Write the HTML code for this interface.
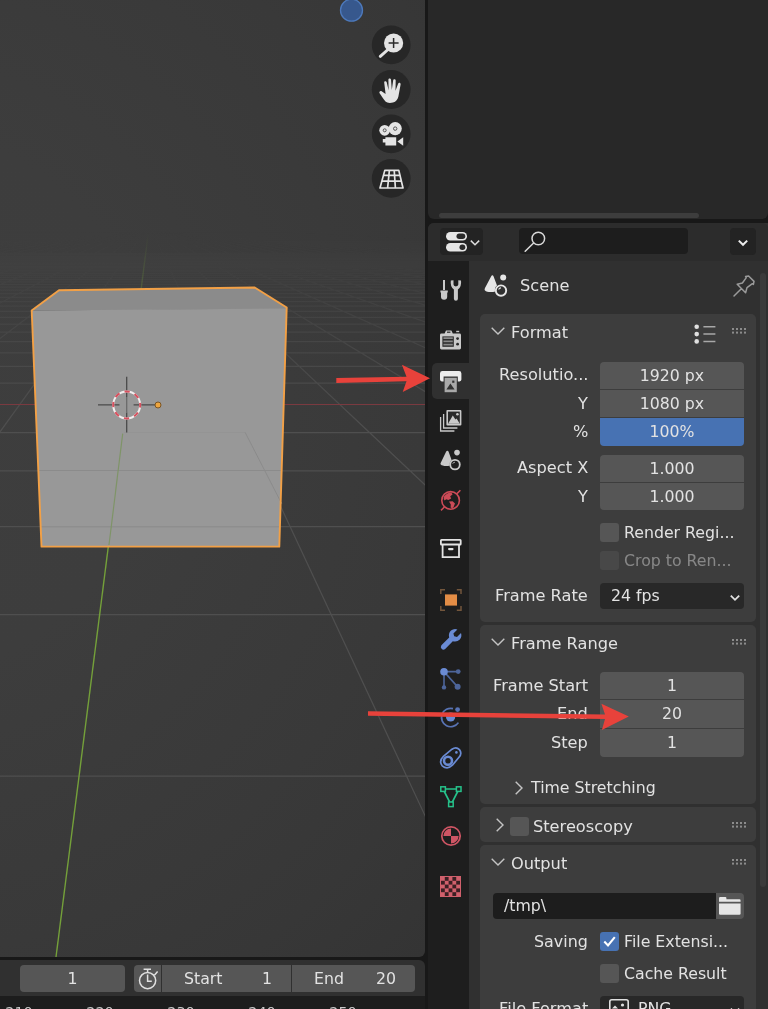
<!DOCTYPE html>
<html lang="en">
<head>
<meta charset="utf-8">
<title>Blender - Output Properties</title>
<style>
html,body{margin:0;padding:0;background:#181818;}
body{width:768px;height:1009px;overflow:hidden;position:relative;font-family:"DejaVu Sans","Liberation Sans",sans-serif;font-size:15.75px;color:#e2e2e2;}
.a{position:absolute;}
svg{position:absolute;overflow:visible;}
.t{position:absolute;white-space:nowrap;line-height:20px;height:20px;will-change:transform;}
.r,.h{font-size:16.2px;}
.r{text-align:right;}
.c{text-align:center;}
#viewport{left:0;top:0;width:425px;height:957px;background:#383838 radial-gradient(ellipse 800px 830px at -110px 403px,#3e3e3e 0%,#3d3d3d 33.3%,#3b3b3b 50%,#393939 66.7%,#373737 80%,#343434 94.3%,#333333 100%);overflow:hidden;border-radius:0 0 6px 0;}
#outliner{left:428px;top:0;width:340px;height:219px;background:#282828;border-radius:0 0 6px 6px;}
#oscroll{left:439px;top:213px;width:260px;height:5px;background:#3d3d3d;border-radius:3px;}
#props{left:428px;top:223px;width:340px;height:786px;background:#303030;border-radius:6px 0 0 0;}
#phead{left:428px;top:223px;width:340px;height:38px;background:#2c2c2c;border-radius:6px 6px 0 0;}
#tabs{left:428px;top:261px;width:40.5px;height:748px;background:#1e1e1e;}
#atab{left:432px;top:363px;width:36.5px;height:36px;background:#303030;border-radius:5px 0 0 5px;}
#vscroll{left:760px;top:273px;width:6px;height:614px;background:#3b3b3b;border-radius:3px;}
#timeline{left:0;top:960px;width:425px;height:49px;background:#1d1d1d;border-radius:0 6px 0 0;overflow:hidden;}
#tlhead{left:0;top:0;width:425px;height:36px;background:#303030;}
.panel{position:absolute;left:480px;width:276px;background:#3d3d3d;border-radius:5px;}
.fld{will-change:transform;position:absolute;left:600px;width:144px;background:#565656;text-align:center;white-space:nowrap;}
.cb{position:absolute;left:600px;width:19px;height:19px;background:#565656;border-radius:3px;}
.dd{position:absolute;left:600px;width:144px;background:#282828;border-radius:4px;}
.dim{opacity:.45;}
.tf{will-change:transform;position:absolute;top:5px;height:27px;line-height:27px;background:#565656;white-space:nowrap;}
</style>
</head>
<body>
<div id="viewport" class="a"><svg width="425" height="957" viewBox="0 0 425 957" style="left:0;top:0;"><defs><linearGradient id="fade" x1="0" y1="232" x2="0" y2="430" gradientUnits="userSpaceOnUse"><stop offset="0" stop-color="#000"/><stop offset="1" stop-color="#fff"/></linearGradient><mask id="gm" maskUnits="userSpaceOnUse" x="0" y="0" width="425" height="957"><rect x="0" y="0" width="425" height="957" fill="url(#fade)"/></mask></defs><path d="M0 253.1H425 M0 253.7H425 M0 254.3H425 M0 255.0H425 M0 255.7H425 M0 256.4H425 M0 257.2H425 M0 257.9H425 M0 258.8H425 M0 259.7H425 M0 260.6H425 M0 261.6H425 M0 262.6H425 M0 263.7H425 M0 264.8H425 M0 266.1H425 M0 267.4H425 M0 268.8H425 M0 270.3H425 M0 271.9H425 M0 273.6H425 M0 275.4H425 M0 277.4H425 M0 279.5H425 M0 281.9H425 M0 284.4H425 M0 287.2H425 M0 290.2H425 M0 293.6H425 M0 297.3H425 M0 301.5H425 M0 306.1H425 M0 311.4H425 M0 317.4H425 M0 324.2H425 M0 332.2H425 M0 341.6H425 M0 352.8H425 M0 366.4H425 M0 383.2H425 M0 432.5H425 M0 470.8H425 M0 526.5H425 M0 614.7H425 M0 776.0H425 M149.3 225.0L-12992.6 957 M149.3 225.0L-12557.6 957 M149.3 225.0L-12122.7 957 M149.3 225.0L-11687.7 957 M149.3 225.0L-11252.8 957 M149.3 225.0L-10817.8 957 M149.3 225.0L-10382.9 957 M149.3 225.0L-9947.9 957 M149.3 225.0L-9513.0 957 M149.3 225.0L-9078.0 957 M149.3 225.0L-8643.0 957 M149.3 225.0L-8208.1 957 M149.3 225.0L-7773.1 957 M149.3 225.0L-7338.2 957 M149.3 225.0L-6903.2 957 M149.3 225.0L-6468.3 957 M149.3 225.0L-6033.3 957 M149.3 225.0L-5598.4 957 M149.3 225.0L-5163.4 957 M149.3 225.0L-4728.5 957 M149.3 225.0L-4293.5 957 M149.3 225.0L-3858.5 957 M149.3 225.0L-3423.6 957 M149.3 225.0L-2988.6 957 M149.3 225.0L-2553.7 957 M149.3 225.0L-2118.7 957 M149.3 225.0L-1683.8 957 M149.3 225.0L-1248.8 957 M149.3 225.0L-813.9 957 M149.3 225.0L-378.9 957 M149.3 225.0L491.0 957 M149.3 225.0L926.0 957 M149.3 225.0L1360.9 957 M149.3 225.0L1795.9 957 M149.3 225.0L2230.8 957 M149.3 225.0L2665.8 957 M149.3 225.0L3100.7 957 M149.3 225.0L3535.7 957 M149.3 225.0L3970.6 957 M149.3 225.0L4405.6 957 M149.3 225.0L4840.5 957 M149.3 225.0L5275.5 957 M149.3 225.0L5710.5 957 M149.3 225.0L6145.4 957 M149.3 225.0L6580.4 957 M149.3 225.0L7015.3 957 M149.3 225.0L7450.3 957 M149.3 225.0L7885.2 957 M149.3 225.0L8320.2 957 M149.3 225.0L8755.1 957 M149.3 225.0L9190.1 957 M149.3 225.0L9625.0 957 M149.3 225.0L10060.0 957 M149.3 225.0L10494.9 957 M149.3 225.0L10929.9 957 M149.3 225.0L11364.9 957 M149.3 225.0L11799.8 957 M149.3 225.0L12234.8 957 M149.3 225.0L12669.7 957 M149.3 225.0L13104.7 957" stroke="#4f4f4f" stroke-width="1.25" fill="none" mask="url(#gm)"/><path d="M0 404.5H425" stroke="#7a3a40" stroke-width="1.2"/><path d="M149.3 225.0L56 957" stroke="#74a03a" stroke-width="1.4" mask="url(#gm)"/><path d="M31.7 310.5L59 290.3L254.7 287.5L286.7 307.5L286.6 309.5Z" fill="#8b8b8b"/><path d="M31.7 310.5L286.7 308.6L279.3 546.6L41.5 546.6Z" fill="#989898"/><path d="M124 432.5H246" stroke="#949494" stroke-width="1" fill="none"/><path d="M38 470.5H282M40 526.8H280M245.2 432.5L281.6 503.5" stroke="#8b8b8b" stroke-width="1" fill="none"/><path d="M122.7 433.6L109 545" stroke="#7f9468" stroke-width="1.2" fill="none"/><path d="M31.7 310.5L59 290.3L254.7 287.5L286.7 307.5L279.3 546.6L41.5 546.6Z" fill="none" stroke="#f2a046" stroke-width="1.9" stroke-linejoin="round"/><path d="M98 404.9H119.5M133.6 404.9H155.5M126.7 376.7V397M126.7 412.5V432.4" stroke="#4a4a4a" stroke-width="1.3"/><path d="M126.7 397V412.5" stroke="#6a6a6a" stroke-width="1.3"/><circle cx="126.7" cy="404.9" r="13.5" fill="none" stroke="#f2eeee" stroke-width="2"/><circle cx="126.7" cy="404.9" r="13.5" fill="none" stroke="#d8505e" stroke-width="2" stroke-dasharray="5.3 5.3" stroke-dashoffset="2.6"/><circle cx="158" cy="405" r="3" fill="#eda53f" stroke="#7a5424" stroke-width="1"/><circle cx="351.5" cy="10.2" r="11" fill="#37588d" stroke="#4d79bb" stroke-width="1.3"/><circle cx="391.2" cy="44.9" r="19.4" fill="#272727"/><circle cx="391.2" cy="89.5" r="19.4" fill="#272727"/><circle cx="391.2" cy="133.9" r="19.4" fill="#272727"/><circle cx="391.2" cy="178.4" r="19.4" fill="#272727"/><path d="M388 49.5L380.3 56.3" stroke="#e4e4e4" stroke-width="3" stroke-linecap="round"/><circle cx="393.6" cy="43" r="9.6" fill="#e4e4e4"/><path d="M388.6 43H398.6M393.6 38V48" stroke="#2a2a2a" stroke-width="1.5"/><path d="M385.5 101.5C383.5 99 381 95.5 379.6 93.3C378.8 92 380.2 90.6 381.6 91.3L385.6 94L384.2 82.6C384 81 386.3 80.6 386.7 82.2L388.6 90.2L388.4 79.6C388.4 78 390.8 78 391 79.6L391.8 90L393.2 80.2C393.4 78.7 395.7 78.9 395.7 80.5L395.5 90.8L398.2 83.6C398.8 82.1 400.9 82.8 400.6 84.4L398.4 96.5C397.8 99.5 396 101.8 393 102.5C390 103.2 387 103 385.5 101.5Z" fill="#e4e4e4"/><circle cx="384.7" cy="130.3" r="5.4" fill="#e4e4e4"/><circle cx="395.2" cy="128.6" r="6.6" fill="#e4e4e4"/><circle cx="384.7" cy="130.3" r="1.5" fill="none" stroke="#555" stroke-width="1"/><circle cx="395.2" cy="128.6" r="1.7" fill="none" stroke="#555" stroke-width="1"/><path d="M385.4 137.2H396.2V145.6H385.4ZM382.8 139H385.6V142.6H382.8ZM397.4 141.5L403.2 137.3V145.7Z" fill="#e4e4e4"/><path d="M384.8 170.4H398.8L403 188H380ZM389.4 170.4L387.6 188M394.2 170.4L395.4 188M383.6 175.4H400M382 181.2H401.4" fill="none" stroke="#e4e4e4" stroke-width="1.7" stroke-linejoin="round"/></svg></div>
<div id="outliner" class="a"></div>
<div id="oscroll" class="a"></div>
<div id="props" class="a"></div>
<div id="phead" class="a"></div>
<div id="tabs" class="a"></div>
<div id="atab" class="a"></div>
<div id="vscroll" class="a"></div>
<svg width="22" height="22" viewBox="0 0 22 22" style="left:440px;top:280px;"><g fill="#c9c9c9"><rect x="3" y="0" width="2" height="10"/><path d="M0.4 10.6H7.8V12.4H7.2V16.8Q7.2 19.8 4.1 19.8Q1 19.8 1 16.8V12.4H0.4Z"/><path d="M10.8 0.6L13.5 0.2V4.6Q13.5 6.4 15.9 6.4Q18.3 6.4 18.3 4.6V0.2L21 0.6Q21.8 6.8 17.9 9.6V18.8Q17.9 20.8 15.9 20.8Q13.9 20.8 13.9 18.8V9.6Q10 6.8 10.8 0.6Z"/></g></svg>
<svg width="22" height="22" viewBox="0 0 22 22" style="left:440px;top:330px;"><g fill="#c9c9c9"><path d="M0 5Q0 3.6 1.4 3.6H4.6L6 0.6H11.4L12.8 3.6H19.6Q21 3.6 21 5V18Q21 19.4 19.6 19.4H1.4Q0 19.4 0 18Z"/><rect x="16.2" y="0.8" width="3" height="1.4"/></g><rect x="2.4" y="6.4" width="11.4" height="10.4" fill="#2a2a2a"/><path d="M3.4 8.2H12.8M3.4 11.4H12.8M3.4 14.6H12.8" stroke="#8a8a8a" stroke-width="1.7"/><circle cx="17.6" cy="8.6" r="1.4" fill="#2a2a2a"/><circle cx="17.6" cy="14.2" r="1.4" fill="#2a2a2a"/><rect x="7" y="1.6" width="3.4" height="1.2" fill="#2a2a2a"/></svg>
<svg width="22" height="22" viewBox="0 0 22 22" style="left:440px;top:370.5px;"><path d="M0 2.4Q0 0 2.4 0H19Q21.4 0 21.4 2.4V8.6Q21.4 10.4 19.6 10.4H17.8V5.6H3.6V10.4H1.8Q0 10.4 0 8.6Z" fill="#ededed"/><rect x="4.6" y="6.8" width="12.2" height="14.4" fill="#a9a9a9"/><path d="M6.4 18.6L10.4 12.4L14.6 18.6Z" fill="#333"/><rect x="12.2" y="9.6" width="2.2" height="2.2" fill="#333"/></svg>
<svg width="22" height="22" viewBox="0 0 22 22" style="left:440px;top:409.5px;"><path d="M3.6 4V18H17.4M0.6 7V21H14.4" fill="none" stroke="#c9c9c9" stroke-width="1.3"/><rect x="6.4" y="0" width="15" height="15.4" rx="1" fill="#c9c9c9"/><rect x="8" y="1.6" width="11.8" height="12.2" fill="#2a2a2a"/><path d="M8 13.8L12.8 5.4L15.4 9.6L16.6 8.4L19.8 13.8Z" fill="#c9c9c9"/><circle cx="17.4" cy="4.2" r="1.3" fill="#c9c9c9"/></svg>
<svg width="22" height="22" viewBox="0 0 22 22" style="left:440px;top:448.5px;"><g fill="#c9c9c9"><path d="M6.2 2.6C6.8 1.4 8 1.4 8.5 2.6L11.6 11C9.8 12.4 9.4 14.6 10 16.4C7 17.6 2.2 17.2 0.8 15.6C0.3 15 0.5 14.2 0.9 13.4Z"/><circle cx="17" cy="3.6" r="2.8"/></g><circle cx="15" cy="15.6" r="4.8" fill="none" stroke="#c9c9c9" stroke-width="1.8"/><path d="M12.8 14.6A2.4 2.4 0 0 1 14.8 13.2" fill="none" stroke="#c9c9c9" stroke-width="1"/></svg>
<svg width="22" height="22" viewBox="0 0 22 22" style="left:440px;top:488.5px;"><circle cx="10.6" cy="11.4" r="8.8" fill="none" stroke="#cc4b57" stroke-width="1.6"/><path d="M4 7.4Q7 3.6 11.4 3.4L12.6 5.6L10.2 7.2L11.2 9.4L8.4 11L6.2 10.2L4.6 11.4Q3.2 9.6 4 7.4ZM9 12.6L12.6 12.2L15 14.4L13.4 18.4Q11.6 19.4 10.6 18.6L10.8 15.6Z" fill="#cc4b57"/><path d="M1 21.4L4.4 18M17 4.6L20.4 1.2" stroke="#cc4b57" stroke-width="1.5"/></svg>
<svg width="22" height="22" viewBox="0 0 22 22" style="left:440px;top:539px;"><rect x="0.9" y="0.9" width="19.8" height="4.6" rx="0.6" fill="none" stroke="#e4e4e4" stroke-width="1.8"/><path d="M2.6 5.6V18.2H19V5.6" fill="none" stroke="#e4e4e4" stroke-width="1.8"/><rect x="8" y="9" width="5.6" height="2.2" rx="1.1" fill="#e4e4e4"/></svg>
<svg width="22" height="22" viewBox="0 0 22 22" style="left:440px;top:589px;"><rect x="5" y="5.4" width="12" height="11.2" fill="#e38d46"/><path d="M0.8 5V0.8H5M16.8 0.8H21V5M21 17V21.2H16.8M5 21.2H0.8V17" fill="none" stroke="#73563c" stroke-width="1.5"/></svg>
<svg width="22" height="22" viewBox="0 0 22 22" style="left:440px;top:628px;"><path d="M1.4 17.2L9.2 9.6Q8 5.4 11 2.6Q13.8 0.2 17.4 1.4L13.4 5.4L14.2 8.2L17 9L21 5Q22.2 8.6 19.8 11.4Q17 14.4 12.8 13.2L5.2 21Q3.2 22.4 1.6 20.8Q0 19.2 1.4 17.2Z" fill="#6a8bd4"/></svg>
<svg width="22" height="22" viewBox="0 0 22 22" style="left:440px;top:668px;"><path d="M4 3.6H18M4 3.6V19.4M4 3.6L17.4 18.6" stroke="#4d659a" stroke-width="1.6"/><circle cx="4" cy="3.8" r="3.8" fill="#6a8bd4"/><circle cx="18.2" cy="3.6" r="2.4" fill="#4d659a"/><circle cx="4" cy="19.4" r="2.2" fill="#4d659a"/><circle cx="17.6" cy="18.8" r="3" fill="#4d659a"/></svg>
<svg width="22" height="22" viewBox="0 0 22 22" style="left:440px;top:706px;"><path d="M18.4 16.6A9.2 9.2 0 1 1 13 2.6" fill="none" stroke="#5873b4" stroke-width="1.7"/><circle cx="10.6" cy="11" r="4.6" fill="#6a8bd4"/><circle cx="17.6" cy="3.6" r="2.4" fill="#5873b4"/></svg>
<svg width="22" height="22" viewBox="0 0 22 22" style="left:440px;top:747px;"><path d="M2.2 18.8Q-1.4 14 3.4 9.4L12 2.2Q16.2 -0.8 19.4 2.6Q22.4 6.4 19 10.2L12.4 18.2Q7.4 23 2.2 18.8Z" fill="none" stroke="#6a8bd4" stroke-width="1.7"/><circle cx="8" cy="13.8" r="4" fill="none" stroke="#6a8bd4" stroke-width="2.6"/><circle cx="16.4" cy="5.4" r="1.3" fill="#6a8bd4"/></svg>
<svg width="22" height="22" viewBox="0 0 22 22" style="left:440px;top:785.5px;"><path d="M3 3H19L11 18.6Z" fill="none" stroke="#26c28a" stroke-width="1.7"/><g fill="#1e1e1e" stroke="#26c28a" stroke-width="1.5"><rect x="0.8" y="0.8" width="4.6" height="4.6"/><rect x="16.4" y="0.8" width="4.6" height="4.6"/><rect x="8.6" y="16" width="4.6" height="4.6"/></g></svg>
<svg width="22" height="22" viewBox="0 0 22 22" style="left:440px;top:825px;"><circle cx="11" cy="11" r="9.2" fill="none" stroke="#cf5564" stroke-width="1.7"/><path d="M11 11V3.4A7.6 7.6 0 0 0 3.4 11ZM11 11V18.6A7.6 7.6 0 0 0 18.6 11Z" fill="#cf5564"/></svg>
<svg width="22" height="22" viewBox="0 0 22 22" style="left:440px;top:875.5px;"><rect x="0" y="0" width="21" height="21" fill="#d0606c"/><rect x="1.0" y="4.8" width="3.8" height="3.8" fill="#3a1f23"/><rect x="1.0" y="12.4" width="3.8" height="3.8" fill="#3a1f23"/><rect x="4.8" y="1.0" width="3.8" height="3.8" fill="#3a1f23"/><rect x="4.8" y="8.6" width="3.8" height="3.8" fill="#3a1f23"/><rect x="4.8" y="16.2" width="3.8" height="3.8" fill="#3a1f23"/><rect x="8.6" y="4.8" width="3.8" height="3.8" fill="#3a1f23"/><rect x="8.6" y="12.4" width="3.8" height="3.8" fill="#3a1f23"/><rect x="12.4" y="1.0" width="3.8" height="3.8" fill="#3a1f23"/><rect x="12.4" y="8.6" width="3.8" height="3.8" fill="#3a1f23"/><rect x="12.4" y="16.2" width="3.8" height="3.8" fill="#3a1f23"/><rect x="16.2" y="4.8" width="3.8" height="3.8" fill="#3a1f23"/><rect x="16.2" y="12.4" width="3.8" height="3.8" fill="#3a1f23"/></svg>
<div class="a" style="left:440px;top:228px;width:43px;height:27px;background:#232323;border-radius:4px;"></div>
<svg width="22" height="20" viewBox="0 0 22 20" style="left:446px;top:232px;"><rect x="0" y="0" width="21" height="8.6" rx="4.3" fill="#e6e6e6"/><rect x="10.5" y="1.6" width="8.8" height="5.4" rx="2.7" fill="#2a2a2a"/><rect x="0" y="11" width="21" height="8.6" rx="4.3" fill="#e6e6e6"/><rect x="13.5" y="12.6" width="5.8" height="5.4" rx="2.7" fill="#2a2a2a"/></svg>
<svg width="10" height="6" viewBox="0 0 10 6" style="left:469.5px;top:239.8px;"><path d="M0.8 0.6L5 4.8L9.2 0.6" fill="none" stroke="#dcdcdc" stroke-width="1.5"/></svg>
<div class="a" style="left:519px;top:228px;width:169px;height:26px;background:#1d1d1d;border-radius:4px;"></div>
<svg width="22" height="22" viewBox="0 0 22 22" style="left:524px;top:231px;"><circle cx="14.3" cy="7.5" r="6.3" fill="none" stroke="#d8d8d8" stroke-width="1.5"/><path d="M9.6 12L1.2 20.2" stroke="#d8d8d8" stroke-width="1.6" stroke-linecap="round"/></svg>
<div class="a" style="left:730px;top:228px;width:26px;height:27px;background:#232323;border-radius:4px;"></div>
<svg width="10" height="6" viewBox="0 0 10 6" style="left:738px;top:240px;"><path d="M0.8 0.6L5 4.8L9.2 0.6" fill="none" stroke="#ececec" stroke-width="2"/></svg>
<svg width="24" height="24" viewBox="0 0 24 24" style="left:484px;top:273px;" fill="#e6e6e6"><path d="M7.2 3.2C7.8 2 9 2 9.5 3.2L13 12.5C11 14 10.5 16.5 11.2 18.4C8 19.6 2.5 19.2 1 17.5C0.4 16.8 0.6 16 1 15Z"/><circle cx="19.2" cy="4.6" r="3"/><circle cx="17" cy="17.6" r="5.2" fill="none" stroke="#e6e6e6" stroke-width="1.9"/><path d="M14.6 16.4A2.8 2.8 0 0 1 17 14.9" fill="none" stroke="#e6e6e6" stroke-width="1.1"/></svg>
<div class="t h" style="left:520px;top:275.5px;">Scene</div>
<svg width="22" height="22" viewBox="0 0 22 22" style="left:733px;top:275px;"><path d="M1 21L8.3 13.7M4.2 9.3L12.6 17.8L14 12.6L19.4 8.7L20.4 9.4L21 6.4L15.6 1L12.6 1.6L13.3 2.6L9.4 8Z" fill="none" stroke="#9a9a9a" stroke-width="1.5" stroke-linejoin="round" stroke-linecap="round"/></svg>
<div class="panel" style="top:313.5px;height:308.5px;"></div>
<svg width="14" height="8" viewBox="0 0 14 8" style="left:490.8px;top:327px;"><path d="M0.7 0.7L7 7L13.3 0.7" fill="none" stroke="#c4c4c4" stroke-width="1.4"/></svg>
<div class="t h" style="left:510.5px;top:322.5px;">Format</div>
<svg width="24" height="20" viewBox="0 0 24 20" style="left:694px;top:323.6px;"><circle cx="2.7" cy="2.7" r="2.3" fill="#e0e0e0"/><circle cx="2.7" cy="10.1" r="2.3" fill="#e0e0e0"/><circle cx="2.7" cy="17.4" r="2.3" fill="#e0e0e0"/><path d="M9.4 2.7H21.4M9.4 10.1H21.4M9.4 17.4H21.4" stroke="#a8a8a8" stroke-width="1.5"/></svg>
<svg width="14" height="6" viewBox="0 0 14 6" style="left:731.5px;top:327.6px;" fill="#8c8c8c"><rect x="0" y="0" width="2" height="2"/><rect x="0" y="3.6" width="2" height="2"/><rect x="4" y="0" width="2" height="2"/><rect x="4" y="3.6" width="2" height="2"/><rect x="8" y="0" width="2" height="2"/><rect x="8" y="3.6" width="2" height="2"/><rect x="12" y="0" width="2" height="2"/><rect x="12" y="3.6" width="2" height="2"/></svg>
<div class="t r " style="right:180px;top:365.0px;">Resolutio...</div>
<div class="t r " style="right:180px;top:393.5px;">Y</div>
<div class="t r " style="right:180px;top:422.0px;">%</div>
<div class="fld" style="top:362px;height:27px;line-height:27px;border-radius:4px 4px 0 0;">1920 px</div>
<div class="fld" style="top:390px;height:27px;line-height:27px;border-radius:0;">1080 px</div>
<div class="fld" style="top:418px;height:28px;line-height:28px;border-radius:0 0 4px 4px;background:#4772b3;">100%</div>
<div class="t r " style="right:180px;top:458.0px;">Aspect X</div>
<div class="t r " style="right:180px;top:486.5px;">Y</div>
<div class="fld" style="top:455px;height:27px;line-height:27px;border-radius:4px 4px 0 0;">1.000</div>
<div class="fld" style="top:483px;height:27px;line-height:27px;border-radius:0 0 4px 4px;">1.000</div>
<div class="cb" style="top:522.5px;"></div>
<div class="t " style="left:624px;top:522.5px;">Render Regi...</div>
<div class="cb dim" style="top:551px;"></div>
<div class="t dim" style="left:624px;top:551.0px;">Crop to Ren...</div>
<div class="t r " style="right:180px;top:586.0px;">Frame Rate</div>
<div class="dd" style="top:583px;height:26px;"></div>
<div class="t " style="left:611px;top:586.0px;">24 fps</div>
<svg width="10" height="6" viewBox="0 0 10 6" style="left:730px;top:594.5px;"><path d="M0.8 0.6L5 4.8L9.2 0.6" fill="none" stroke="#e0e0e0" stroke-width="1.8"/></svg>
<div class="panel" style="top:625px;height:179px;"></div>
<svg width="14" height="8" viewBox="0 0 14 8" style="left:490.8px;top:638px;"><path d="M0.7 0.7L7 7L13.3 0.7" fill="none" stroke="#c4c4c4" stroke-width="1.4"/></svg>
<div class="t h" style="left:510.5px;top:633.5px;">Frame Range</div>
<svg width="14" height="6" viewBox="0 0 14 6" style="left:731.5px;top:638.6px;" fill="#8c8c8c"><rect x="0" y="0" width="2" height="2"/><rect x="0" y="3.6" width="2" height="2"/><rect x="4" y="0" width="2" height="2"/><rect x="4" y="3.6" width="2" height="2"/><rect x="8" y="0" width="2" height="2"/><rect x="8" y="3.6" width="2" height="2"/><rect x="12" y="0" width="2" height="2"/><rect x="12" y="3.6" width="2" height="2"/></svg>
<div class="t r " style="right:180px;top:675.8px;">Frame Start</div>
<div class="t r " style="right:180px;top:704.0px;">End</div>
<div class="t r " style="right:180px;top:732.5px;">Step</div>
<div class="fld" style="top:672px;height:27px;line-height:27px;border-radius:4px 4px 0 0;">1</div>
<div class="fld" style="top:700px;height:27.5px;line-height:27.5px;border-radius:0;">20</div>
<div class="fld" style="top:728.5px;height:27.5px;line-height:27.5px;border-radius:0 0 4px 4px;">1</div>
<svg width="8" height="14" viewBox="0 0 8 14" style="left:515px;top:780.5px;"><path d="M0.7 0.7L7 7L0.7 13.3" fill="none" stroke="#c4c4c4" stroke-width="1.4"/></svg>
<div class="t " style="left:530.5px;top:778.0px;">Time Stretching</div>
<div class="panel" style="top:807px;height:35px;"></div>
<svg width="8" height="14" viewBox="0 0 8 14" style="left:495.5px;top:818px;"><path d="M0.7 0.7L7 7L0.7 13.3" fill="none" stroke="#c4c4c4" stroke-width="1.4"/></svg>
<div class="cb" style="left:510px;top:816.5px;"></div>
<div class="t h" style="left:533px;top:816.5px;">Stereoscopy</div>
<svg width="14" height="6" viewBox="0 0 14 6" style="left:731.5px;top:821.6px;" fill="#8c8c8c"><rect x="0" y="0" width="2" height="2"/><rect x="0" y="3.6" width="2" height="2"/><rect x="4" y="0" width="2" height="2"/><rect x="4" y="3.6" width="2" height="2"/><rect x="8" y="0" width="2" height="2"/><rect x="8" y="3.6" width="2" height="2"/><rect x="12" y="0" width="2" height="2"/><rect x="12" y="3.6" width="2" height="2"/></svg>
<div class="panel" style="top:845px;height:200px;"></div>
<svg width="14" height="8" viewBox="0 0 14 8" style="left:490.8px;top:858px;"><path d="M0.7 0.7L7 7L13.3 0.7" fill="none" stroke="#c4c4c4" stroke-width="1.4"/></svg>
<div class="t h" style="left:510.5px;top:853.5px;">Output</div>
<svg width="14" height="6" viewBox="0 0 14 6" style="left:731.5px;top:858.6px;" fill="#8c8c8c"><rect x="0" y="0" width="2" height="2"/><rect x="0" y="3.6" width="2" height="2"/><rect x="4" y="0" width="2" height="2"/><rect x="4" y="3.6" width="2" height="2"/><rect x="8" y="0" width="2" height="2"/><rect x="8" y="3.6" width="2" height="2"/><rect x="12" y="0" width="2" height="2"/><rect x="12" y="3.6" width="2" height="2"/></svg>
<div class="a" style="left:493px;top:893px;width:223px;height:26px;background:#1d1d1d;border-radius:4px 0 0 4px;"></div>
<div class="a" style="left:716px;top:893px;width:28px;height:26px;background:#565656;border-radius:0 4px 4px 0;"></div>
<svg width="22" height="18" viewBox="0 0 22 18" style="left:719px;top:897px;" fill="#e6e6e6"><path d="M0 1.2Q0 0 1.2 0H6.4Q7.4 0 7.4 1V2.2H20.4Q21.6 2.2 21.6 3.4V4.8H0Z"/><path d="M0 6.4H21.6V16.6Q21.6 17.8 20.4 17.8H1.2Q0 17.8 0 16.6Z"/></svg>
<div class="t " style="left:504px;top:896.0px;">/tmp\</div>
<div class="t r " style="right:180.5px;top:932.0px;font-size:15.9px;">Saving</div>
<div class="cb" style="top:932px;background:#4772b3;"></div>
<svg width="19" height="19" viewBox="0 0 19 19" style="left:600px;top:932px;"><path d="M4.3 9.6L8 13.4L14.8 5.2" fill="none" stroke="#ffffff" stroke-width="2.1"/></svg>
<div class="t " style="left:624px;top:932.0px;">File Extensi...</div>
<div class="cb" style="top:963.5px;"></div>
<div class="t " style="left:624px;top:963.5px;">Cache Result</div>
<div class="t r " style="right:180px;top:998.5px;">File Format</div>
<div class="dd" style="top:996px;height:26px;"></div>
<svg width="20" height="16" viewBox="0 0 20 16" style="left:609px;top:998.5px;"><rect x="0.8" y="0.8" width="18.4" height="16" rx="2" fill="none" stroke="#e0e0e0" stroke-width="1.6"/><circle cx="13.5" cy="6" r="1.6" fill="#e0e0e0"/><path d="M3 9.5L6 6.5L9 9.5" fill="#e0e0e0"/></svg>
<div class="t " style="left:637.5px;top:998.5px;">PNG</div>
<svg width="10" height="6" viewBox="0 0 10 6" style="left:730px;top:1007.5px;"><path d="M0.8 0.6L5 4.8L9.2 0.6" fill="none" stroke="#e0e0e0" stroke-width="1.8"/></svg>
<svg width="768" height="1009" viewBox="0 0 768 1009" style="left:0;top:0;" fill="#e8423b"><path d="M336.3 378.1L406.5 376.8L401.9 364.8L430 378.2L402.7 391.9L406.5 381.3L336.3 383.1Z"/><path d="M368 711.3L605 714.5L601.4 703.7L628.8 716.4L601.9 730.1L605 718.9L368 715.8Z"/></svg>
<div id="timeline" class="a"><div id="tlhead" class="a"></div><div class="tf c" style="left:20px;width:105px;border-radius:4px;">1</div><div class="tf" style="left:134px;width:27px;border-radius:4px 0 0 4px;"></div><svg width="20" height="22" viewBox="0 0 20 22" style="left:138px;top:7.5px;"><circle cx="9.6" cy="12.6" r="8.1" fill="none" stroke="#e0e0e0" stroke-width="1.5"/><path d="M9.6 6.6V13.2H13.8M5.6 1.2H13M9.6 1.2V4.4M16.4 7.2L19.6 3.6" fill="none" stroke="#e0e0e0" stroke-width="1.5"/></svg><div class="tf" style="left:162px;width:129px;"><span class="a" style="left:22px;">Start</span><span class="a" style="right:19px;">1</span></div><div class="tf" style="left:292px;width:123px;border-radius:0 4px 4px 0;"><span class="a" style="left:22px;">End</span><span class="a" style="right:19px;">20</span></div><div class="a c" style="left:-11px;width:60px;top:44px;font-size:14.4px;line-height:16px;color:#c8c8c8;">210</div><div class="a c" style="left:70px;width:60px;top:44px;font-size:14.4px;line-height:16px;color:#c8c8c8;">220</div><div class="a c" style="left:151px;width:60px;top:44px;font-size:14.4px;line-height:16px;color:#c8c8c8;">230</div><div class="a c" style="left:232px;width:60px;top:44px;font-size:14.4px;line-height:16px;color:#c8c8c8;">240</div><div class="a c" style="left:313px;width:60px;top:44px;font-size:14.4px;line-height:16px;color:#c8c8c8;">250</div></div>
</body>
</html>
